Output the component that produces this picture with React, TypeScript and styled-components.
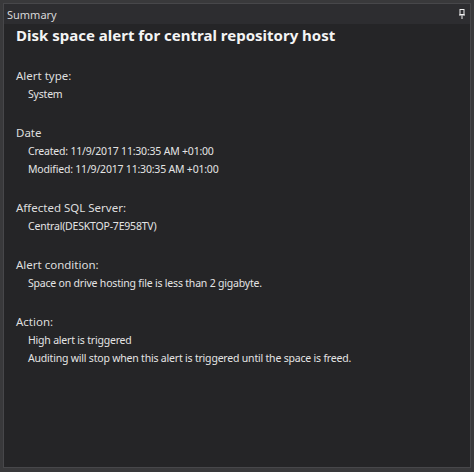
import React from 'react';
import styled, { createGlobalStyle } from 'styled-components';

const Global = createGlobalStyle`
  html, body {
    margin: 0;
    padding: 0;
    background: #3a3a3c;
  }
  #root {
    width: 474px;
    height: 472px;
  }
`;

const Frame = styled.div`
  box-sizing: border-box;
  width: 474px;
  height: 472px;
  padding: 3px 3px 4px 3px;
  background: #39393b;
  display: flex;
`;

const Panel = styled.section`
  flex: 1;
  display: flex;
  flex-direction: column;
  border: 1px solid #47474a;
  background: #252527;
`;

const Header = styled.header`
  height: 20px;
  flex: none;
  display: flex;
  align-items: center;
  justify-content: space-between;
  padding: 0 4px 0 3px;
  background: #2d2d30;
  font-family: "Noto Sans", "Open Sans", sans-serif;
  font-size: 11px;
  color: #d8d8d8;
`;

const Pin = styled.svg`
  width: 8px;
  height: 10px;
`;

const Body = styled.div`
  flex: 1;
  padding: 0 12px;
  font-family: "Noto Sans", "Open Sans", sans-serif;
  color: #e2e2e2;
`;

const Title = styled.h1`
  margin: 0 0 21px 0;
  font-size: 15px;
  font-weight: 700;
  line-height: 22px;
  color: #f4f4f4;
`;

const Section = styled.div`
  margin-bottom: 21px;
  line-height: 18px;
`;

const Label = styled.div`
  font-size: 11.5px;
  color: #dedede;
`;

const Value = styled.div`
  padding-left: 12px;
  font-size: 10.5px;
  letter-spacing: -0.2px;
  color: #e4e4e4;
`;

const sections: { label: string; values: string[] }[] = [
  { label: 'Alert type:', values: ['System'] },
  {
    label: 'Date',
    values: ['Created: 11/9/2017 11:30:35 AM +01:00', 'Modified: 11/9/2017 11:30:35 AM +01:00'],
  },
  { label: 'Affected SQL Server:', values: ['Central(DESKTOP-7E958TV)'] },
  { label: 'Alert condition:', values: ['Space on drive hosting file is less than 2 gigabyte.'] },
  {
    label: 'Action:',
    values: [
      'High alert is triggered',
      'Auditing will stop when this alert is triggered until the space is freed.',
    ],
  },
];

export default function App() {
  return (
    <>
      <Global />
      <Frame>
        <Panel>
          <Header>
            <span>Summary</span>
            <Pin viewBox="0 0 8 10">
              <rect x="2" y="0.5" width="4" height="5" fill="none" stroke="#f0f0f0" strokeWidth="1" />
              <rect x="1" y="5.5" width="6" height="1" fill="#f0f0f0" />
              <rect x="3.5" y="6.5" width="1" height="3.5" fill="#f0f0f0" />
            </Pin>
          </Header>
          <Body>
            <Title>Disk space alert for central repository host</Title>
            {sections.map((s) => (
              <Section key={s.label}>
                <Label>{s.label}</Label>
                {s.values.map((v) => (
                  <Value key={v}>{v}</Value>
                ))}
              </Section>
            ))}
          </Body>
        </Panel>
      </Frame>
    </>
  );
}
